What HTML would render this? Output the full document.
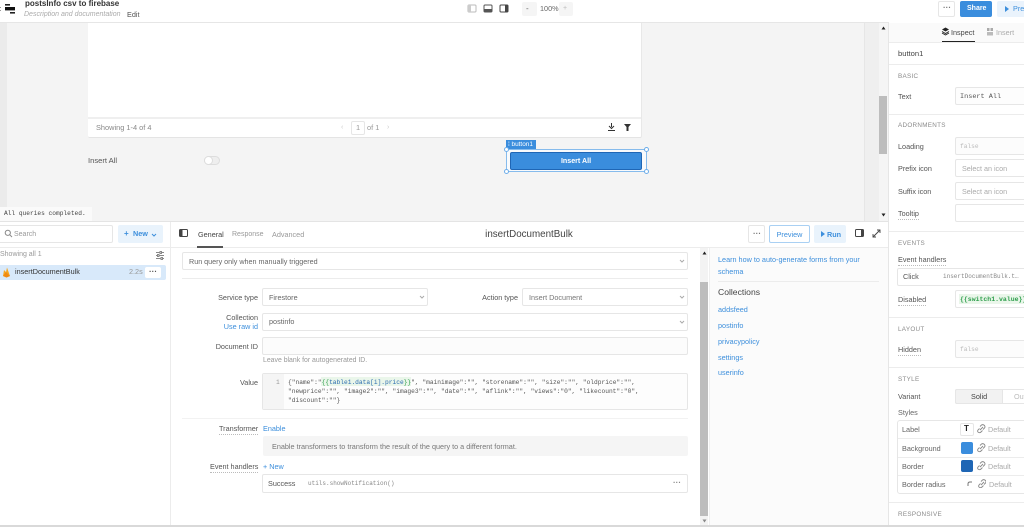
<!DOCTYPE html>
<html><head><meta charset="utf-8">
<style>
html,body{margin:0;padding:0;width:1024px;height:527px;overflow:hidden;background:#fff}
body{position:relative;font-family:"Liberation Sans",sans-serif;font-size:8px;color:#444}
div,span.a,svg{position:absolute}
.t{position:absolute;white-space:nowrap;line-height:12px;height:12px;margin-top:1px}
.r{text-align:right}
.m{font-family:"Liberation Mono",monospace}
.b{background:#fff;border:1px solid #e6e6e6;border-radius:2px;box-sizing:border-box}
.l{background:#ececec;height:1px}
.h{color:#8a8a8a;font-size:6.3px;letter-spacing:.3px}
.u{border-bottom:1px dotted #bbb;line-height:10px;height:10px}
.lnk{color:#3d8fdc}
</style></head><body>

<!-- canvas -->
<div style="left:0;top:22px;width:888px;height:199px;background:#f4f4f4"></div>
<div style="left:0;top:22px;width:7px;height:199px;background:#ebebeb"></div>
<div style="left:864px;top:22px;width:15px;height:199px;background:#efefef;border-left:1px solid #e6e6e6;box-sizing:border-box"></div>
<div style="left:879px;top:22px;width:9px;height:199px;background:#f5f5f5"></div>
<div style="left:879px;top:96px;width:8px;height:58px;background:#bdbdbd"></div>
<svg style="left:881px;top:26px" width="5" height="4"><path d="M2.5 0.5L4.5 3.5H.5Z" fill="#222"/></svg>
<svg style="left:881px;top:213px" width="5" height="4"><path d="M2.5 3.5L4.5 .5H.5Z" fill="#222"/></svg>

<!-- top bar -->
<div style="left:0;top:0;width:1024px;height:22px;background:#fff;border-bottom:1px solid #e6e6e6;box-sizing:content-box"></div>
<svg style="left:0;top:2px" width="18" height="13"><rect x="0" y="5" width="1" height="1" fill="#999"/><rect x="0" y="8" width="1" height="1" fill="#999"/><rect x="5" y="2" width="5" height="1.6" fill="#222"/><rect x="5" y="5" width="10" height="3.4" fill="#111"/><rect x="10" y="10" width="5" height="1.6" fill="#222"/></svg>
<span class="t" style="left:25px;top:-3px;font-size:8px;color:#333;font-weight:bold">postsInfo csv to firebase</span>
<span class="t" style="left:24px;top:8px;font-size:7px;color:#aaa;font-style:italic">Description and documentation</span>
<span class="t" style="left:127px;top:8px;font-size:7.25px;color:#555">Edit</span>
<svg style="left:467px;top:4px" width="60" height="10" fill="none"><rect x="1" y="1" width="8" height="7" rx="1" stroke="#bbb" stroke-width="1"/><rect x="1" y="1" width="3" height="7" fill="#ccc"/><rect x="17" y="1" width="8" height="7" rx="1" stroke="#555"/><rect x="17" y="5" width="8" height="3" fill="#555"/><rect x="33" y="1" width="8" height="7" rx="1" stroke="#444"/><rect x="38" y="1" width="3" height="7" fill="#444"/></svg>
<div style="left:522px;top:2px;width:15px;height:14px;background:#f5f5f5;border-radius:2px"></div>
<span class="t" style="left:526px;top:2px;font-size:8px;color:#666">-</span>
<span class="t" style="left:540px;top:2px;font-size:7.25px;color:#666">100%</span>
<div style="left:559px;top:2px;width:14px;height:14px;background:#f5f5f5;border-radius:2px"></div>
<span class="t" style="left:563px;top:2px;font-size:7px;color:#bbb">+</span>
<div class="b" style="left:938px;top:1px;width:17px;height:16px"></div>
<span class="t" style="left:943px;top:1px;font-size:8px;color:#777;font-weight:bold">···</span>
<div style="left:960px;top:1px;width:32px;height:16px;background:#3a8ddd;border-radius:2px"></div>
<span class="t" style="left:967px;top:2px;font-size:7px;color:#fff;font-weight:bold">Share</span>
<div style="left:997px;top:1px;width:27px;height:16px;background:#eaf3fc;border-radius:2px 0 0 2px"></div>
<svg style="left:1005px;top:6px" width="5" height="6"><path d="M0 0L4 3L0 6Z" fill="#3d8fdc"/></svg>
<span class="t" style="left:1013px;top:2px;font-size:7.25px;color:#3d8fdc">Pre</span>

<!-- table card -->
<div style="left:88px;top:23px;width:554px;height:115px;background:#fff;border-right:1px solid #e8e8e8;border-bottom:1px solid #e4e4e4;border-radius:0 0 2px 2px;box-sizing:border-box"></div>
<div style="left:88px;top:117px;width:553px;height:1.5px;background:#efefef"></div>
<span class="t" style="left:96px;top:121px;font-size:7.4px;color:#888">Showing 1-4 of 4</span>
<span class="t" style="left:341px;top:121px;font-size:7px;color:#ccc">‹</span>
<div class="b" style="left:351px;top:121px;width:14px;height:14px;border-radius:2px"></div>
<span class="t" style="left:356px;top:121px;font-size:7.4px;color:#999">1</span>
<span class="t" style="left:367px;top:121px;font-size:7.4px;color:#999">of 1</span>
<span class="t" style="left:387px;top:121px;font-size:7px;color:#ccc">›</span>
<svg style="left:607px;top:123px" width="26" height="9"><path d="M4.5 0V4M2 3L4.5 5.5L7 3" stroke="#333" fill="none"/><rect x="1" y="7" width="7" height="1" fill="#333"/><path d="M17 1H24L21.5 4V8H19.5V4Z" fill="#333"/></svg>

<!-- canvas widgets -->
<span class="t" style="left:88px;top:154px;font-size:7.6px;color:#555">Insert All</span>
<div style="left:204px;top:156px;width:16px;height:9px;border-radius:5px;background:#eee;border:1px solid #ddd;box-sizing:border-box"></div>
<div style="left:204px;top:156px;width:9px;height:9px;border-radius:5px;background:#fff;border:1px solid #ddd;box-sizing:border-box"></div>

<div style="left:506px;top:140px;width:30px;height:9px;background:#3a8ddd"></div>
<span class="t" style="left:508px;top:138px;font-size:6.4px;color:#fff">⁞ button1</span>
<div style="left:506px;top:149px;width:141px;height:23px;border:1.3px solid #86bbec;box-sizing:border-box;background:#f8fafc"></div>
<div style="left:510px;top:152px;width:132px;height:18px;background:#3a8ddd;border:1px solid #1f66b5;border-radius:2px;box-sizing:border-box"></div>
<span class="t" style="left:510px;top:154px;width:132px;text-align:center;font-size:7.1px;color:#fff;font-weight:bold">Insert All</span>
<div style="left:504px;top:147px;width:5px;height:5px;border-radius:50%;background:#fff;border:1px solid #6cadea;box-sizing:border-box"></div>
<div style="left:644px;top:147px;width:5px;height:5px;border-radius:50%;background:#fff;border:1px solid #6cadea;box-sizing:border-box"></div>
<div style="left:504px;top:169px;width:5px;height:5px;border-radius:50%;background:#fff;border:1px solid #6cadea;box-sizing:border-box"></div>
<div style="left:644px;top:169px;width:5px;height:5px;border-radius:50%;background:#fff;border:1px solid #6cadea;box-sizing:border-box"></div>

<!-- status -->
<div style="left:0;top:207px;width:92px;height:14px;background:#fafafa"></div>
<span class="t m" style="left:4px;top:207px;font-size:6.2px;color:#444">All queries completed.</span>

<!-- bottom panel -->
<div style="left:0;top:221px;width:888px;height:306px;background:#fff;border-top:1px solid #e4e4e4;box-sizing:border-box"></div>
<div style="left:170px;top:222px;width:1px;height:305px;background:#ececec"></div>

<!-- left list -->
<div class="b" style="left:-2px;top:225px;width:115px;height:18px"></div>
<svg style="left:4px;top:229px" width="9" height="9" fill="none"><circle cx="3.8" cy="3.8" r="2.6" stroke="#888"/><path d="M5.8 5.8L8 8" stroke="#888"/></svg>
<span class="t" style="left:14px;top:228px;font-size:7px;color:#999">Search</span>
<div style="left:118px;top:225px;width:45px;height:18px;background:#e9f3fc;border-radius:2px"></div>
<span class="t" style="left:124px;top:227px;font-size:8px;color:#3d8fdc;font-weight:bold">+</span>
<span class="t" style="left:133px;top:227px;font-size:7.25px;color:#3d8fdc;font-weight:bold">New</span>
<svg style="left:151px;top:233px" width="6" height="4" fill="none"><path d="M1 1L3 3L5 1" stroke="#3d8fdc"/></svg>
<div class="l" style="left:0;top:247px;width:170px"></div>
<span class="t" style="left:0;top:248px;font-size:7px;color:#999">Showing all 1</span>
<svg style="left:155px;top:251px" width="10" height="9" fill="none" stroke="#888"><path d="M1 1.5H9M1 4.5H9M1 7.5H9"/><rect x="5" y=".5" width="1.5" height="2" fill="#fff"/><rect x="2.5" y="3.5" width="1.5" height="2" fill="#fff"/><rect x="6" y="6.5" width="1.5" height="2" fill="#fff"/></svg>
<div style="left:0;top:265px;width:166px;height:15px;background:#d8e9fa;border-radius:0 2px 2px 0"></div>
<svg style="left:2px;top:267px" width="9" height="11"><path d="M1 9L2 3L4 5L5 0.5L8 9L4.5 10.5Z" fill="#f5a623"/><path d="M1 9L4 5L8 9L4.5 10.5Z" fill="#f08a12"/></svg>
<span class="t" style="left:15px;top:265px;font-size:7.25px;color:#333">insertDocumentBulk</span>
<span class="t" style="left:129px;top:265px;font-size:7.25px;color:#999">2.2s</span>
<div style="left:145px;top:267px;width:16px;height:11px;background:#fff;border-radius:2px"></div>
<span class="t" style="left:149px;top:265px;font-size:8px;color:#555;font-weight:bold">···</span>

<!-- query header -->
<div class="l" style="left:171px;top:247px;width:717px"></div>
<svg style="left:179px;top:229px" width="10" height="9" fill="none"><rect x=".5" y=".5" width="8" height="7" rx="1" stroke="#444"/><rect x="1" y="1" width="2.5" height="6" fill="#444"/></svg>
<span class="t" style="left:198px;top:228px;font-size:7.25px;color:#444">General</span>
<div style="left:197px;top:246px;width:26px;height:2px;background:#555"></div>
<span class="t" style="left:232px;top:228px;font-size:7px;color:#999">Response</span>
<span class="t" style="left:272px;top:228px;font-size:7.25px;color:#999">Advanced</span>
<span class="t" style="left:429px;top:228px;width:200px;text-align:center;font-size:9.8px;color:#444">insertDocumentBulk</span>
<div class="b" style="left:748px;top:225px;width:17px;height:18px"></div>
<span class="t" style="left:753px;top:227px;font-size:8px;color:#777;font-weight:bold">···</span>
<div style="left:769px;top:225px;width:41px;height:18px;background:#fff;border:1px solid #a9d0f3;border-radius:2px;box-sizing:border-box"></div>
<span class="t" style="left:769px;top:228px;width:41px;text-align:center;font-size:7.25px;color:#3d8fdc">Preview</span>
<div style="left:814px;top:225px;width:32px;height:18px;background:#e9f3fc;border-radius:2px"></div>
<svg style="left:821px;top:231px" width="5" height="6"><path d="M0 0L4 3L0 6Z" fill="#3d8fdc"/></svg>
<span class="t" style="left:827px;top:228px;font-size:7.25px;color:#3d8fdc;font-weight:bold">Run</span>
<svg style="left:855px;top:229px" width="10" height="9" fill="none"><rect x=".5" y=".5" width="8" height="7" rx="1" stroke="#444"/><rect x="6" y="1" width="2.5" height="6" fill="#444"/></svg>
<svg style="left:872px;top:229px" width="9" height="9" fill="none"><path d="M1.5 7.5L7.5 1.5" stroke="#444"/><path d="M5 1H8V4M1 5V8H4" stroke="#444" stroke-width=".9"/></svg>

<!-- form -->
<div class="b" style="left:182px;top:252px;width:506px;height:18px"></div>
<span class="t" style="left:189px;top:255px;font-size:7.2px;color:#666">Run query only when manually triggered</span>
<svg style="left:679px;top:259px" width="6" height="4" fill="none"><path d="M1 1L3 3L5 1" stroke="#aaa"/></svg>
<div class="l" style="left:182px;top:278px;width:506px"></div>

<span class="t r" style="left:200px;top:291px;width:58px;font-size:7.25px;color:#555">Service type</span>
<div class="b" style="left:262px;top:288px;width:166px;height:18px"></div>
<span class="t" style="left:269px;top:291px;font-size:7.25px;color:#666">Firestore</span>
<svg style="left:419px;top:295px" width="6" height="4" fill="none"><path d="M1 1L3 3L5 1" stroke="#aaa"/></svg>
<span class="t r" style="left:460px;top:291px;width:58px;font-size:7.25px;color:#555">Action type</span>
<div class="b" style="left:522px;top:288px;width:166px;height:18px"></div>
<span class="t" style="left:529px;top:291px;font-size:7.25px;color:#777">Insert Document</span>
<svg style="left:679px;top:295px" width="6" height="4" fill="none"><path d="M1 1L3 3L5 1" stroke="#aaa"/></svg>

<span class="t r" style="left:200px;top:311px;width:58px;font-size:7.25px;color:#555">Collection</span>
<span class="t r lnk" style="left:200px;top:320px;width:58px;font-size:7.25px">Use raw id</span>
<div class="b" style="left:262px;top:313px;width:426px;height:18px"></div>
<span class="t" style="left:269px;top:315px;font-size:7.25px;color:#666">postinfo</span>
<svg style="left:679px;top:320px" width="6" height="4" fill="none"><path d="M1 1L3 3L5 1" stroke="#aaa"/></svg>

<span class="t r" style="left:200px;top:340px;width:58px;font-size:7.25px;color:#555">Document ID</span>
<div class="b" style="left:262px;top:337px;width:426px;height:18px;background:#fcfcfc"></div>
<span class="t" style="left:263px;top:354px;font-size:6.9px;color:#999">Leave blank for autogenerated ID.</span>

<span class="t r" style="left:200px;top:376px;width:58px;font-size:7.25px;color:#555">Value</span>
<div class="b" style="left:262px;top:373px;width:426px;height:37px;background:#fdfdfd"></div>
<div style="left:263px;top:374px;width:21px;height:35px;background:#f5f5f5"></div>
<span class="t m" style="left:276px;top:376px;font-size:6.2px;color:#999">1</span>
<div style="left:321px;top:377px;width:90px;height:9px;background:#eaf6ea"></div>
<span class="t m" style="left:288px;top:376px;font-size:6.23px;color:#555">{"name":"<span style="color:#2e9e4c">{{</span><span style="color:#2b6cb0">table1.data[i].price</span><span style="color:#2e9e4c">}}</span>", "mainimage":"", "storename":"", "size":"", "oldprice":"",</span>
<span class="t m" style="left:288px;top:385px;font-size:6.23px;color:#555">"newprice":"", "image2":"", "image3":"", "date":"", "aflink":"", "views":"0", "likecount":"0",</span>
<span class="t m" style="left:288px;top:394px;font-size:6.23px;color:#555">"discount":""}</span>
<div class="l" style="left:182px;top:418px;width:506px;background:#f2f2f2"></div>

<span class="t u" style="left:219px;top:423px;font-size:7.25px;color:#555">Transformer</span>
<span class="t lnk" style="left:263px;top:422px;font-size:7.25px">Enable</span>
<div style="left:263px;top:436px;width:425px;height:20px;background:#f5f5f5;border-radius:2px"></div>
<span class="t" style="left:272px;top:440px;font-size:7.25px;color:#777">Enable transformers to transform the result of the query to a different format.</span>
<span class="t u" style="left:210px;top:461px;font-size:7.25px;color:#555">Event handlers</span>
<span class="t lnk" style="left:263px;top:460px;font-size:7.25px">+ New</span>
<div class="b" style="left:262px;top:474px;width:426px;height:19px"></div>
<span class="t" style="left:268px;top:477px;font-size:7.25px;color:#555">Success</span>
<span class="t m" style="left:308px;top:477px;font-size:6px;color:#888">utils.showNotification()</span>
<span class="t" style="left:673px;top:476px;font-size:8px;color:#888;font-weight:bold">···</span>

<!-- scrollbar -->
<div style="left:700px;top:248px;width:8px;height:278px;background:#f3f3f3"></div>
<div style="left:700px;top:282px;width:8px;height:234px;background:#bdbdbd"></div>
<svg style="left:702px;top:251px" width="5" height="4"><path d="M2.5 .5L4.5 3.5H.5Z" fill="#222"/></svg>
<svg style="left:702px;top:519px" width="5" height="4"><path d="M2.5 3.5L4.5 .5H.5Z" fill="#888"/></svg>

<!-- side panel -->
<div style="left:709px;top:248px;width:179px;height:278px;background:#fbfbfb;border-left:1px solid #efefef;box-sizing:border-box"></div>
<span class="t lnk" style="left:718px;top:253px;font-size:7.25px">Learn how to auto-generate forms from your</span>
<span class="t lnk" style="left:718px;top:265px;font-size:7.25px">schema</span>
<div class="l" style="left:718px;top:281px;width:161px"></div>
<span class="t" style="left:718px;top:285px;font-size:8.6px;color:#444">Collections</span>
<span class="t lnk" style="left:718px;top:303px;font-size:7.25px">addsfeed</span>
<span class="t lnk" style="left:718px;top:319px;font-size:7.25px">postinfo</span>
<span class="t lnk" style="left:718px;top:335px;font-size:7.25px">privacypolicy</span>
<span class="t lnk" style="left:718px;top:351px;font-size:7.25px">settings</span>
<span class="t lnk" style="left:718px;top:366px;font-size:7.25px">userinfo</span>

<!-- right panel -->
<div style="left:888px;top:22px;width:136px;height:505px;background:#fff;border-left:1px solid #e6e6e6;box-sizing:border-box"></div>
<div style="left:889px;top:23px;width:135px;height:19px;background:#fafafa"></div>
<div class="l" style="left:889px;top:42px;width:135px"></div>
<svg style="left:941px;top:27px" width="9" height="9"><path d="M4.5 .5L8 2.5L4.5 4.5L1 2.5Z" fill="#222"/><path d="M1 4.5L4.5 6.5L8 4.5M1 6L4.5 8L8 6" stroke="#222" fill="none" stroke-width=".9"/></svg>
<span class="t" style="left:951px;top:26px;font-size:7.25px;color:#444">Inspect</span>
<div style="left:942px;top:41px;width:33px;height:1.3px;background:#222"></div>
<svg style="left:986px;top:27px" width="8" height="9"><rect x="1" y="1" width="2.5" height="3" fill="#aaa"/><rect x="4.5" y="1" width="2.5" height="3" fill="#aaa"/><rect x="1" y="5" width="6" height="3.5" fill="#bbb"/></svg>
<span class="t" style="left:996px;top:26px;font-size:7.25px;color:#aaa">Insert</span>

<span class="t" style="left:898px;top:47px;font-size:7.6px;color:#444">button1</span>
<div class="l" style="left:889px;top:64px;width:135px"></div>
<span class="t h" style="left:898px;top:70px">BASIC</span>
<span class="t" style="left:898px;top:90px;font-size:7.25px;color:#555">Text</span>
<div class="b" style="left:955px;top:87px;width:75px;height:18px;background:#fdfdfd"></div>
<span class="t m" style="left:960px;top:90px;font-size:6.85px;color:#555">Insert All</span>
<div class="l" style="left:889px;top:114px;width:135px"></div>
<span class="t h" style="left:898px;top:119px">ADORNMENTS</span>
<span class="t" style="left:898px;top:140px;font-size:7.25px;color:#555">Loading</span>
<div class="b" style="left:955px;top:137px;width:75px;height:18px;background:#fcfcfc"></div>
<span class="t m" style="left:960px;top:140px;font-size:6.2px;color:#bbb">false</span>
<span class="t" style="left:898px;top:162px;font-size:7.25px;color:#555">Prefix icon</span>
<div class="b" style="left:955px;top:159px;width:75px;height:18px"></div>
<span class="t" style="left:962px;top:162px;font-size:7.2px;color:#aaa">Select an icon</span>
<span class="t" style="left:898px;top:185px;font-size:7.25px;color:#555">Suffix icon</span>
<div class="b" style="left:955px;top:182px;width:75px;height:18px"></div>
<span class="t" style="left:962px;top:185px;font-size:7.2px;color:#aaa">Select an icon</span>
<span class="t u" style="left:898px;top:208px;font-size:7.25px;color:#555">Tooltip</span>
<div class="b" style="left:955px;top:204px;width:75px;height:18px"></div>
<div class="l" style="left:889px;top:231px;width:135px"></div>
<span class="t h" style="left:898px;top:237px">EVENTS</span>
<span class="t u" style="left:898px;top:254px;font-size:7.25px;color:#555">Event handlers</span>
<div class="b" style="left:897px;top:268px;width:133px;height:18px"></div>
<span class="t" style="left:903px;top:270px;font-size:7.25px;color:#555">Click</span>
<span class="t m" style="left:943px;top:270px;font-size:6px;color:#888">insertDocumentBulk.t…</span>
<span class="t u" style="left:898px;top:294px;font-size:7.25px;color:#555">Disabled</span>
<div class="b" style="left:955px;top:290px;width:75px;height:18px"></div>
<div style="left:959px;top:294px;width:65px;height:10px;background:#eaf6ea"></div>
<span class="t m" style="left:960px;top:293px;font-size:6.5px;color:#2e9e4c;font-weight:bold">{{switch1.value}}</span>
<div class="l" style="left:889px;top:317px;width:135px"></div>
<span class="t h" style="left:898px;top:323px">LAYOUT</span>
<span class="t u" style="left:898px;top:344px;font-size:7.25px;color:#555">Hidden</span>
<div class="b" style="left:955px;top:340px;width:75px;height:18px;background:#fcfcfc"></div>
<span class="t m" style="left:960px;top:343px;font-size:6.2px;color:#bbb">false</span>
<div class="l" style="left:889px;top:367px;width:135px"></div>
<span class="t h" style="left:898px;top:373px">STYLE</span>
<span class="t" style="left:898px;top:390px;font-size:7.25px;color:#555">Variant</span>
<div style="left:955px;top:389px;width:75px;height:15px;border:1px solid #e6e6e6;border-radius:2px;box-sizing:border-box"></div>
<div style="left:955px;top:389px;width:48px;height:15px;background:#f2f2f2;border:1px solid #e6e6e6;border-radius:2px 0 0 2px;box-sizing:border-box"></div>
<span class="t" style="left:971px;top:390px;font-size:7.25px;color:#444">Solid</span>
<span class="t" style="left:1014px;top:390px;font-size:7.25px;color:#bbb">Out</span>
<span class="t" style="left:898px;top:406px;font-size:7.25px;color:#666">Styles</span>
<div class="b" style="left:897px;top:420px;width:133px;height:74px;border-radius:3px"></div>
<div class="l" style="left:898px;top:438px;width:126px"></div>
<div class="l" style="left:898px;top:457px;width:126px"></div>
<div class="l" style="left:898px;top:475px;width:126px"></div>
<span class="t" style="left:902px;top:423px;font-size:7.25px;color:#666">Label</span>
<span class="t" style="left:902px;top:442px;font-size:7.25px;color:#666">Background</span>
<span class="t" style="left:902px;top:460px;font-size:7.25px;color:#666">Border</span>
<span class="t" style="left:902px;top:478px;font-size:7.25px;color:#666">Border radius</span>
<div class="b" style="left:960px;top:423px;width:14px;height:13px"></div>
<span class="t" style="left:964px;top:422px;font-size:8px;color:#222;font-weight:bold">T</span>
<div style="left:961px;top:442px;width:12px;height:12px;background:#3a8ddd;border-radius:2px"></div>
<div style="left:961px;top:460px;width:12px;height:12px;background:#1f66b5;border-radius:2px"></div>
<svg style="left:967px;top:481px" width="6" height="6" fill="none"><path d="M1 5V3Q1 1 3 1H5" stroke="#777"/></svg>
<svg style="left:977px;top:424px" width="9" height="64" fill="none" stroke="#888" stroke-width=".9"><g><path d="M3 2.5L4.5 1Q6 0 7.5 1.5Q8.5 3 7.5 4L6 5.5M6 3L3 6M2.5 4.5L1 6Q0 7.5 1.5 8.5Q3 9 4 8L5.5 6.5"/></g><g transform="translate(0,19)"><path d="M3 2.5L4.5 1Q6 0 7.5 1.5Q8.5 3 7.5 4L6 5.5M6 3L3 6M2.5 4.5L1 6Q0 7.5 1.5 8.5Q3 9 4 8L5.5 6.5"/></g><g transform="translate(0,37)"><path d="M3 2.5L4.5 1Q6 0 7.5 1.5Q8.5 3 7.5 4L6 5.5M6 3L3 6M2.5 4.5L1 6Q0 7.5 1.5 8.5Q3 9 4 8L5.5 6.5"/></g><g transform="translate(1,55)"><path d="M3 2.5L4.5 1Q6 0 7.5 1.5Q8.5 3 7.5 4L6 5.5M6 3L3 6M2.5 4.5L1 6Q0 7.5 1.5 8.5Q3 9 4 8L5.5 6.5"/></g></svg>
<span class="t" style="left:988px;top:423px;font-size:7.2px;color:#aaa">Default</span>
<span class="t" style="left:988px;top:442px;font-size:7.2px;color:#aaa">Default</span>
<span class="t" style="left:988px;top:460px;font-size:7.2px;color:#aaa">Default</span>
<span class="t" style="left:989px;top:478px;font-size:7.2px;color:#aaa">Default</span>
<div class="l" style="left:889px;top:502px;width:135px"></div>
<span class="t h" style="left:898px;top:508px">RESPONSIVE</span>

<div style="left:0;top:525px;width:1024px;height:2px;background:#d9d9d9"></div>
</body></html>
